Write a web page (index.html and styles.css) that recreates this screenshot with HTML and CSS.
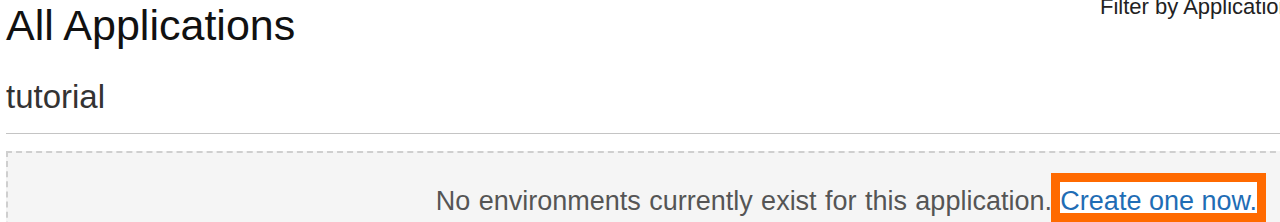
FILE: index.html
```html
<!DOCTYPE html>
<html lang="en">
<head>
    <meta charset="UTF-8">
    <meta name="viewport" content="width=device-width, initial-scale=1.0">
    <title>All Applications</title>
    <link rel="stylesheet" href="styles.css">
</head>
<body>
    <div class="page">
        <div class="page-header">
            <h1>All Applications</h1>
            <div class="filter">
                <label class="filter-label">Filter by Application</label>
            </div>
        </div>

        <div class="app-section">
            <h2>tutorial</h2>
            <div class="divider"></div>
            <div class="empty-box">
                <p class="empty-msg">
                    No environments currently exist for this application.
                    <a href="#" class="create-link">Create one now.</a>
                </p>
            </div>
        </div>
    </div>
</body>
</html>
```

FILE: styles.css
```css
html, body {
    overflow: hidden;
}
body {
    font-family: "Liberation Sans", Arial, Helvetica, sans-serif;
    margin: 0;
    padding: 0;
    background-color: #fff;
    color: #333;
}
.page {
    width: 1290px;
    padding-left: 6px;
}
.page-header {
    display: flex;
    justify-content: space-between;
    align-items: flex-start;
}
.page-header h1 {
    margin: 1px 0 0 0;
    font-size: 43px;
    line-height: 48px;
    font-weight: normal;
    color: #111;
}
.filter {
    width: 196px;
    margin-top: -5px;
}
.filter-label {
    font-size: 22px;
    line-height: 24px;
    color: #222;
    white-space: nowrap;
}
.app-section h2 {
    margin: 28px 0 0 0;
    font-size: 33px;
    line-height: 40px;
    font-weight: normal;
    color: #333;
}
.divider {
    margin-top: 16px;
    height: 1px;
    background-color: #c4c4c4;
}
.empty-box {
    margin-top: 17px;
    border: 2px dashed #cfcfcf;
    background-color: #f5f5f5;
    padding: 29px 37px 30px 0;
}
.empty-msg {
    margin: 0;
    text-align: right;
    font-size: 27px;
    line-height: 30px;
    word-spacing: 0.9px;
    color: #555;
}
.create-link {
    display: inline-block;
    color: #1f6db5;
    text-decoration: none;
    word-spacing: 0;
    background-color: #fff;
    outline: 9px solid #ff6a00;
    padding: 8px 0 0 0;
    line-height: 23px;
}
```
